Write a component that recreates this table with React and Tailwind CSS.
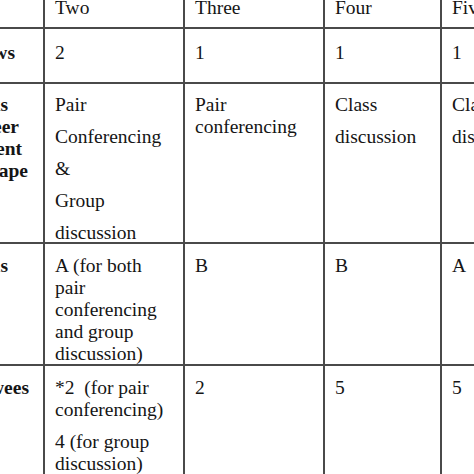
import React from 'react';

const serif = { fontFamily: '"Liberation Serif", "Times New Roman", Times, serif' };

// each left-column line is pushed against the right edge so the word runs off the page on the left
function LeftLines({ lines }) {
  return (
    <div className="overflow-hidden font-bold">
      {lines.map(([word, pr], i) => (
        <div key={i} className="flex justify-end whitespace-nowrap" style={{ paddingRight: pr }}>
          <span>{word}</span>
        </div>
      ))}
    </div>
  );
}

function Paras({ items }) {
  return (
    <div className="whitespace-nowrap">
      {items.map((lines, i) => (
        <div key={i} className={i < items.length - 1 ? 'mb-[10px]' : ''}>
          {lines.map((l, j) => (
            <div key={j} className="whitespace-pre">{l}</div>
          ))}
        </div>
      ))}
    </div>
  );
}

function Cell({ children, pt = 'pt-[11px]' }) {
  return <div className={`bg-white overflow-hidden pl-[10px] ${pt}`}>{children}</div>;
}

export default function App() {
  return (
    <div className="w-[474px] h-[474px] overflow-hidden bg-white text-[#151515] text-[19.5px] leading-[22px]" style={serif}>
      <div className="-mt-[16px] grid w-[600px] grid-cols-[43px_138px_138px_115px_158px] grid-rows-[43px_53px_158px_120px_134px] gap-[2px] bg-[#4a4a4a]">
        {/* header */}
        <div className="bg-white" />
        <Cell pt="pt-[13px]">Two</Cell>
        <Cell pt="pt-[13px]">Three</Cell>
        <Cell pt="pt-[13px]">Four</Cell>
        <Cell pt="pt-[13px]">Five</Cell>

        {/* interviews */}
        <div className="bg-white pt-[13px]">
          <LeftLines lines={[['interviews', 28]]} />
        </div>
        <Cell pt="pt-[13px]">2</Cell>
        <Cell pt="pt-[13px]">1</Cell>
        <Cell pt="pt-[13px]">1</Cell>
        <Cell pt="pt-[13px]">1</Cell>

        {/* activities */}
        <div className="bg-white pt-[10px]">
          <LeftLines lines={[['Tasks', 35], ['Peer', 24], ['Student', 21], ['Landscape', 15]]} />
        </div>
        <Cell pt="pt-[10px]">
          <Paras items={[['Pair'], ['Conferencing'], ['&'], ['Group'], ['discussion']]} />
        </Cell>
        <Cell pt="pt-[10px]">
          <Paras items={[['Pair', 'conferencing']]} />
        </Cell>
        <Cell pt="pt-[10px]">
          <Paras items={[['Class'], ['discussion']]} />
        </Cell>
        <Cell pt="pt-[10px]">
          <Paras items={[['Class'], ['discussion']]} />
        </Cell>

        {/* groups */}
        <div className="bg-white pt-[11px]">
          <LeftLines lines={[['Levels', 35]]} />
        </div>
        <Cell>
          <Paras items={[['A (for both', 'pair', 'conferencing', 'and group', 'discussion)']]} />
        </Cell>
        <Cell>B</Cell>
        <Cell>B</Cell>
        <Cell>A</Cell>

        {/* interviewees */}
        <div className="bg-white pt-[11px]">
          <LeftLines lines={[['Interviewees', 14]]} />
        </div>
        <Cell>
          <Paras items={[['*2  (for pair', 'conferencing)'], ['4 (for group', 'discussion)']]} />
        </Cell>
        <Cell>2</Cell>
        <Cell>5</Cell>
        <Cell>5</Cell>
      </div>
    </div>
  );
}
